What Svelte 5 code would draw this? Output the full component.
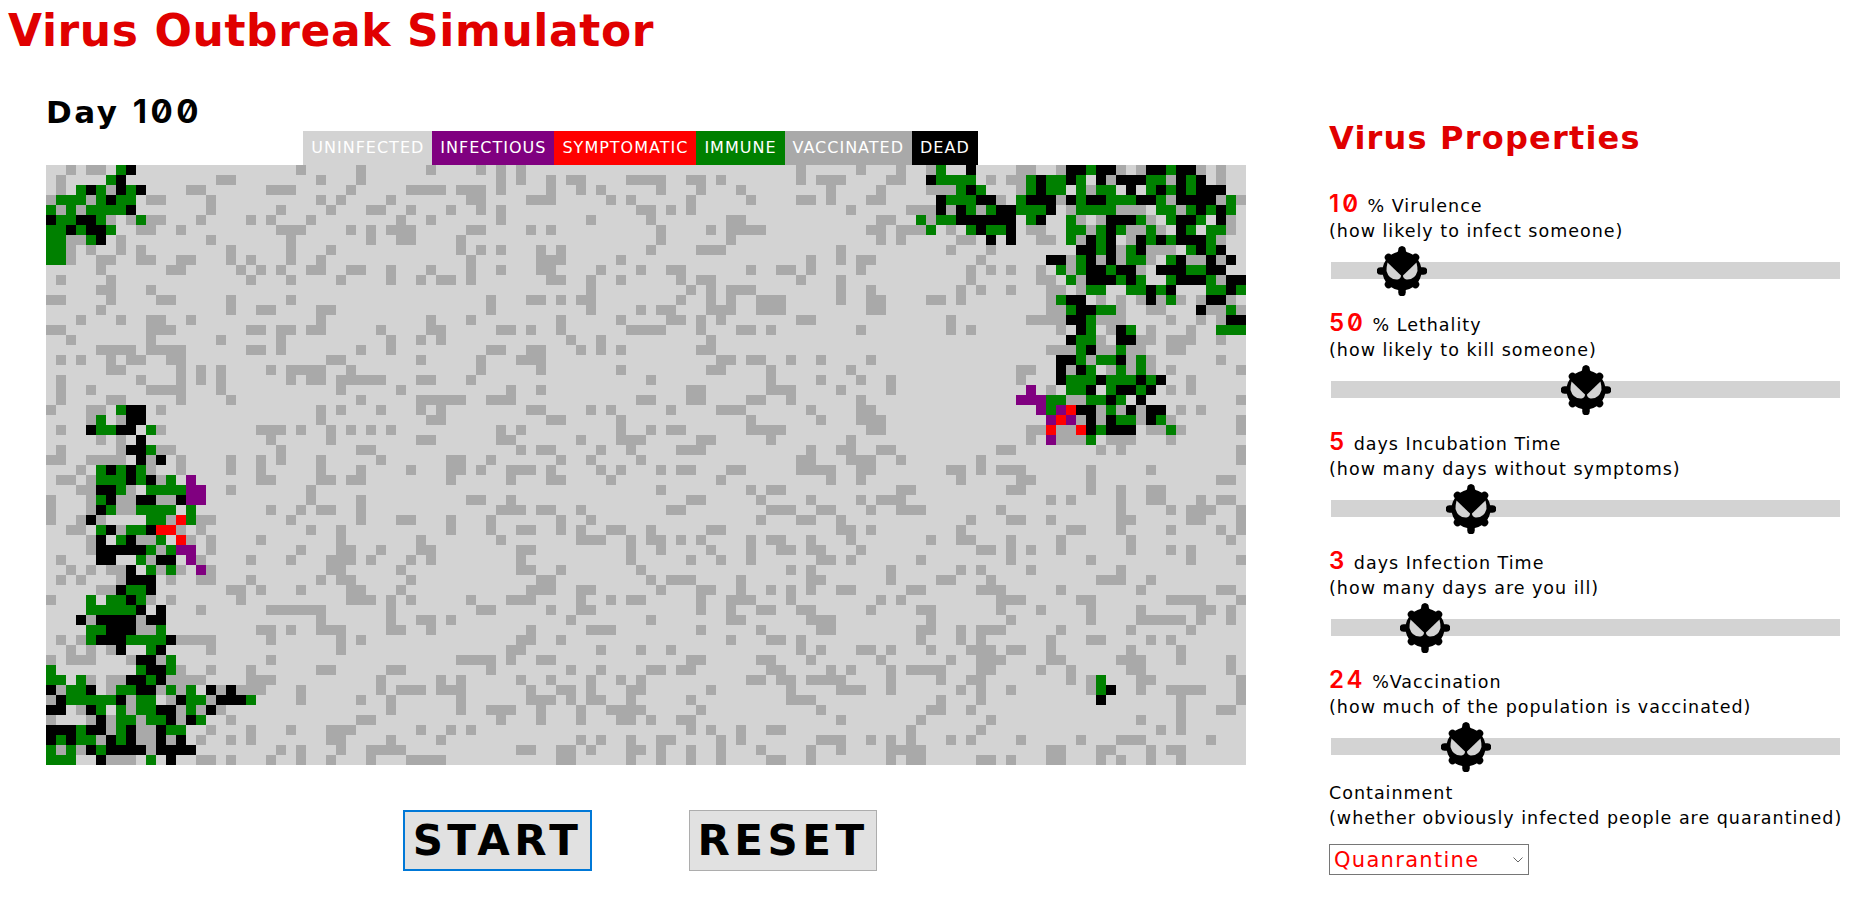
<script>
	const COLS = 120;
	const ROWS = 60;

	// the outbreak clusters, row -> runs of cell types
	// a vaccinated, g immune, k dead, r symptomatic, p infectious, l uninfected
	const clusters = {
		0: 'a2 a4-5 g7 k8 a88 g89 k92 a97-98 a101 k102-103 g104 k105-106 a107 a109 k110-111 g112 k113-114 a115 a117',
		1: 'a1 g6 k7 k88 g89-92 a94 a96-97 g98 k99 g100-101 k102 g103 k105 a106 k107-109 g110-111 a112 k113 g114 k115 a117',
		2: 'a1 g3 k4 g5 a6 k7 g8 k9 a88-90 g91 k92 g93 a97 g98 k99 g100-101 g103 a104 g105-106 k108 g110 k111 g112 k113 g114 k115-117',
		3: 'a0 g1-3 a4 g5 k6 g7-8 a10-11 k89 g90-92 k93-94 a95 g97 k98-100 a101 k102 g103 k104-105 g106-108 k109-110 g111 a112 k113-116 a117 g118 a119',
		4: 'g0 a1 g2 a3 g4-7 k8 a86-88 k89 a90 k91 g92 a93 g94 k95-96 g97-99 k100 a102 g103-106 a107-109 g111-112 a113 g114 k115 g116 k117 g118',
		5: 'k0 g1-2 k3-4 g5 a6 a8 g9 a10-11 g87 a88 g89-90 k91-96 g98 k99 g102 a103 a105 k106-108 g109 a110 g112 k113-114 g115 k117 a118',
		6: 'g0-1 k2 g3 k4-5 g6 a9-10 a86-87 g88 a90 g92 k93 g94-95 k96 a98-99 g102-103 a104 g105 k106 g107 a108-109 g110 a111 k113 g114 g116-117 a118',
		7: 'g0-1 a2-3 g4 k5 a7 a91-92 k94 k96 a99-100 g102 a103 k104 g105 k106 a108 k109 g110 k111 g112 k113-115 g116 a117',
		8: 'g0-1 a2 a4 a7 a9 a90 a94 k103-104 g105 k106 a107 g108 k109 a110-112 g114 k115 g116 k117',
		9: 'g0-1 a2 a5-6 a9-10 a93 k100-101 a102 g103 k104 a105 k106 a107 g108-109 a110 g112 k113 a114-115 k116 a117 k118',
		10: 'a5 a92 a94 a96 a99 g101 a102 g103 k104-105 g106 k107-108 a109 k111-113 g114-115 k116-117',
		11: 'a1 a6 a92 a99-100 g102 a103 k104-106 g107 k108 g109 g112 k113-115 g116 a117 k118-119',
		12: 'a91 a93 a96 a100-101 a103 g104-105 g108-109 k110 g111 k112 g116-117 k118 g119',
		13: 'a88-89 a91 a100 g101 k102-103 a105 a107 a109 k110 a111 g112 a113 a115 k116-117 a118',
		14: 'a100-101 g102 k103-104 g105-106 a107 a110-111 k115 a116-117 g118 a119',
		15: 'a90 a98-101 k102-103 g104 a105-107 a112 a115 a117 k118-119',
		16: 'a90 a92 a101 k103 g104 a106 k107 g108 a110 a114 g117-119',
		17: 'k102 g103-104 a105 k107-108 a109-110 a112-114 a117',
		18: 'a100-102 g103 k104 a105-106 g107 a108-109 a112-113',
		19: 'k101-102 g103 a104 g105-106 k107 a108 g109 a110 a117',
		20: 'a97-98 k101 a102 k103 g104 a106 g107 a108 g109 a110 a112 a119',
		21: 'a97 k101 g102-104 k105 g106-108 k109 g110 k111 a114',
		22: 'p98 a100 g102-103 k104 g106 k107-108 g109 k110 a112 a114',
		23: 'p97-99 g100-101 a102-103 g104-105 k106 g107 k109 a119',
		24: 'a0 a4-5 g7 k8-9 a11 p99 g100 p101 r102 k103-104 a105 g106 a107 k108 a109 k110-111 a113 a115',
		25: 'a4 g5 a7 k8-9 p100 r101 p102 a103 k104 a105 k106 g107-108 a109 k110 g111 a112 a119',
		26: 'a1 k4 g5-6 k7-8 g10 a11 a98-99 r100 a101-102 r103 k104 g105 k106-108 a110-111 g112 a113 a119',
		27: 'a5 a7 k9 a98 p100 a101-103 g104 a106-108 a112',
		28: 'a1 a7 k8-9 g10 a11-12',
		29: 'a0-1 a4-7 k9 a10 k11 a13',
		30: 'a3 g5 k6 g7 k8 g9 a10 a13',
		31: 'a1-2 a4 g5-7 k8 g9 k10 a11 g12 p14',
		32: 'a3-4 k5-6 g7 a8 g10-13 p14-15',
		33: 'a0 a4 g5 k6 a7-8 k9-10 a11-12 k13 p14-15',
		34: 'a0 a4 k5 g6 a7-8 g9-12 g14',
		35: 'a0 a3 k4 a5 g10-11 a12 r13 g14 a15-16',
		36: 'a2-3 g5 k6 a7 g8-9 k10 r11-12 a13 a15',
		37: 'a4 k5 g7 k8 a9-10 g11 r13 a14 a16',
		38: 'a4 k5-9 g10 a11 g12 p13-14 a16',
		39: 'a1 k5-6 g9 a10 k11-12 p14 a15',
		40: 'a2 a4 a6-7 k8 g10 a11 g12 a13 p15 a16',
		41: 'a1 a3 a7 k8-10 a12 a15-16',
		42: 'a5-6 k7 g8-9 k10',
		43: 'a0 g4 g6-7 k8 g9 a10 a12',
		44: 'g4-8 k9 k11 a15',
		45: 'k3 a4 k5-8 a9 k10-11',
		46: 'g4-5 k6-8 a9-10 g11',
		47: 'a1 a3 g4 k5-7 g8-11 k12 a13-16',
		48: 'a2 a4 a6 k7 g10 k11 a16',
		49: 'a0 a2-4 a8 k9-10 a11 g12',
		50: 'g0 g9 k10-11 g12 a13 a16',
		51: 'g0-1 g3 a4 a6-7 k8-9 g10 k11 a12-15 a104 g105',
		52: 'k0 a1 g2-3 k4 a6 g7-8 k9-10 a11 g12 a13 g14 k16 a17 k18 a19-20 a104 g105 k106',
		53: 'a0 k1 g2-6 k7 a8 g9-10 a12 k13 g14-15 a16 k17-19 g20 k105',
		54: 'k0-1 a3 k4 g5 g7 a8 g9-10 k11-12 a13 g14 a15 k16 a17',
		55: 'a0 a4 k5 a6 g7-8 a9 g10-11 k12 a13 k14 g15',
		56: 'k0-2 g3 k4-5 a6 g7 k8 a9-10 k11 g12-13 a16',
		57: 'k0 g1 k2 g3-4 a5 k6 g7 k8 a9-10 k11 a12 k13 a15',
		58: 'g0 a1 g2 a3 k4 g5 k6-9 a10 k11-14',
		59: 'g0-2 k5 a6-8 g10 k12 a15-16'
	};

	// parts of the field that the table above covers, no random grey there
	function charted(r, c) {
		if (r <= 11 && c <= 11) return true;
		if (r >= 24 && c <= 17) return true;
		if (r <= 27 && c >= 86) return true;
		if (r >= 50 && r <= 54 && c >= 103 && c <= 107) return true;
		return false;
	}

	function makeCells() {
		let seed = 20200;
		const rnd = () => {
			seed = (seed + 0x6d2b79f5) | 0;
			let t = Math.imul(seed ^ (seed >>> 15), 1 | seed);
			t = (t + Math.imul(t ^ (t >>> 7), 61 | t)) ^ t;
			return ((t ^ (t >>> 14)) >>> 0) / 4294967296;
		};
		const cells = [];
		let prev = [];
		for (let r = 0; r < ROWS; r++) {
			const row = new Array(COLS).fill('l');
			for (let c = 0; c < COLS; c++) {
				// vaccinated people bunch up a little
				const near = row[c - 1] === 'a' || prev[c] === 'a';
				const v = rnd();
				if (!charted(r, c) && v < (near ? 0.3 : 0.19)) row[c] = 'a';
			}
			for (const run of (clusters[r] || '').split(' ')) {
				if (!run) continue;
				const [from, to] = run.slice(1).split('-').map(Number);
				for (let c = from; c <= (to ?? from); c++) row[c] = run[0];
			}
			cells.push(...row);
			prev = row;
		}
		return cells;
	}

	const cells = makeCells();

	const legend = [
		{ label: 'Uninfected', color: 'lightgrey' },
		{ label: 'Infectious', color: 'purple' },
		{ label: 'Symptomatic', color: 'red' },
		{ label: 'Immune', color: 'green' },
		{ label: 'Vaccinated', color: 'darkgrey' },
		{ label: 'Dead', color: 'black' }
	];

	const sliders = [
		{ value: 10, max: 100, unit: '% Virulence', hint: '(how likely to infect someone)' },
		{ value: 50, max: 100, unit: '% Lethality', hint: '(how likely to kill someone)' },
		{ value: 5, max: 20, unit: 'days Incubation Time', hint: '(how many days without symptoms)' },
		{ value: 3, max: 20, unit: 'days Infection Time', hint: '(how many days are you ill)' },
		{ value: 24, max: 100, unit: '%Vaccination', hint: '(how much of the population is vaccinated)' }
	];

	const spikes = [
		[25, 4], [46.5, 25], [25, 46.5], [3.5, 25],
		[11.5, 11.5], [38.5, 11.5], [38.5, 38.5], [11.5, 38.5]
	];
</script>

<div class="page">
	<h1>Virus Outbreak Simulator</h1>
	<div class="columns">
		<main>
			<h2 class="day">Day <span class="num">100</span></h2>
			<ul class="legend">
				{#each legend as item}
					<li style="background: {item.color}">{item.label}</li>
				{/each}
			</ul>
			<div class="grid">
				{#each cells as cell}
					<div class="cell {cell}"></div>
				{/each}
			</div>
			<div class="buttons">
				<button class="focused">START</button>
				<button>RESET</button>
			</div>
		</main>

		<aside>
			<h2 class="props">Virus Properties</h2>
			{#each sliders as s}
				<section class="prop">
					<p class="label"><span class="value num">{s.value}</span> {s.unit}<br />{s.hint}</p>
					<div class="slider">
						<div class="track"></div>
						<svg
							class="thumb"
							viewBox="0 0 50 50"
							width="50"
							height="50"
							style="left: calc((100% - 50px) * {s.value / s.max})"
						>
							<path d="M25 0.5 L18 10 H32 Z" fill="#000" stroke="#000" stroke-width="1" stroke-linejoin="round" />
							<circle cx="25" cy="25" r="19.5" />
							{#each spikes as [x, y]}
								<line x1="25" y1="25" x2={x} y2={y} />
							{/each}
							<path class="eye" d="M10.5 16.5 L24 29.5 Q24 32.5 20.5 33.5 Q12 34 9.5 25 Q9.5 20.5 10.5 16.5 Z" />
							<path class="eye" d="M39.5 16.5 L26 29.5 Q26 32.5 29.5 33.5 Q38 34 40.5 25 Q40.5 20.5 39.5 16.5 Z" />
						</svg>
					</div>
				</section>
			{/each}
			<p class="label containment">Containment<br />(whether obviously infected people are quarantined)</p>
			<div class="select-wrap">
				<select>
					<option>Quanrantine</option>
					<option>None</option>
				</select>
				<svg class="chevron" viewBox="0 0 10 6" width="10" height="6">
					<path d="M0.5 0.5 L5 5 L9.5 0.5" fill="none" stroke="#666" stroke-width="1" />
				</svg>
			</div>
		</aside>
	</div>
</div>

<style>
	:global(body) {
		margin: 0;
		background: #fff;
		font-family: 'DejaVu Sans', sans-serif;
	}
	.page {
		width: 1865px;
		height: 901px;
		overflow: hidden;
	}
	h1 {
		margin: 0;
		padding: 6px 0 0 8px;
		font-size: 44px;
		line-height: 50px;
		letter-spacing: 0.6px;
		font-weight: 700;
		color: #e00000;
	}
	.columns {
		display: flex;
		padding-left: 46px;
	}
	main {
		width: 1200px;
	}
	.day {
		height: 40px;
		margin: 35px 0 0;
		font-size: 31px;
		line-height: 40px;
		letter-spacing: 2.5px;
		font-weight: 700;
		color: #000;
	}
	.day .num {
		font-size: 33px;
		letter-spacing: 3.5px;
	}
	.num {
		font-family: Inter, sans-serif;
		font-feature-settings: 'zero';
	}
	.legend {
		display: flex;
		justify-content: center;
		margin: 0 0 0 -11px;
		padding: 0;
		list-style: none;
		height: 34px;
	}
	.legend li {
		padding: 0 8px;
		font-size: 16px;
		line-height: 34px;
		letter-spacing: 1px;
		text-transform: uppercase;
		color: #fff;
	}
	.grid {
		display: grid;
		grid-template-columns: repeat(120, 10px);
		grid-auto-rows: 10px;
	}
	.l { background: lightgrey; }
	.a { background: darkgrey; }
	.g { background: green; }
	.k { background: black; }
	.r { background: red; }
	.p { background: purple; }
	.buttons {
		display: flex;
		justify-content: center;
		gap: 97px;
		margin-top: 45px;
		padding-right: 12px;
	}
	button {
		width: 188px;
		height: 61px;
		padding: 0;
		border: 1px solid #adadad;
		background: #e1e1e1;
		color: #000;
		font-family: inherit;
		font-size: 42px;
		letter-spacing: 4.5px;
		font-weight: 700;
	}
	button.focused {
		border: 2px solid #0078d7;
		width: 189px;
	}
	aside {
		margin-left: 83px;
		width: 530px;
	}
	.props {
		margin: 0 0 33px;
		padding-top: 62px;
		font-size: 32px;
		line-height: 40px;
		letter-spacing: 1.2px;
		font-weight: 700;
		color: #e00000;
	}
	.prop {
		height: 119px;
	}
	.label {
		margin: 0;
		font-size: 17.5px;
		line-height: 25px;
		letter-spacing: 1px;
		color: #000;
	}
	.value {
		font-size: 24px;
		letter-spacing: 3px;
		font-weight: 600;
		color: #f00;
	}
	.slider {
		position: relative;
		height: 50px;
		margin: 2px 0 0 2px;
		width: 509px;
	}
	.track {
		position: absolute;
		top: 16px;
		left: 0;
		right: 0;
		height: 17px;
		background: lightgrey;
	}
	.thumb {
		position: absolute;
		top: 0;
	}
	.thumb line {
		stroke: #000;
		stroke-width: 7.5;
		stroke-linecap: round;
	}
	.eye {
		fill: lightgrey;
	}
	.containment {
		margin-top: -5px;
	}
	.select-wrap {
		position: relative;
		width: 200px;
		margin-top: 13px;
	}
	select {
		display: block;
		appearance: none;
		width: 200px;
		height: 31px;
		padding: 0 4px;
		border: 1px solid #767676;
		border-radius: 0;
		font-family: inherit;
		font-size: 21px;
		letter-spacing: 1.3px;
		color: #f00;
		background: #fff;
	}
	.chevron {
		position: absolute;
		right: 6px;
		top: 13px;
		pointer-events: none;
	}
</style>
